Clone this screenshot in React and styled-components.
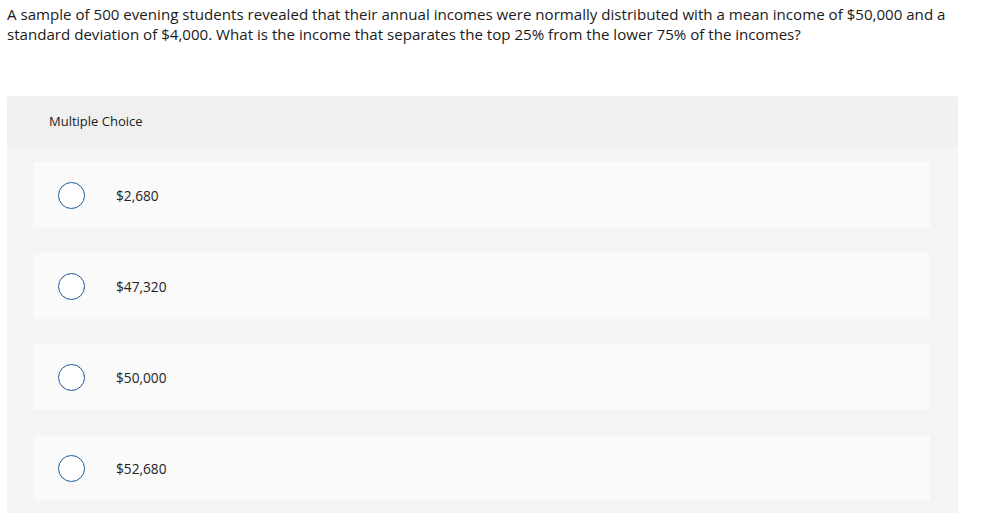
import React from "react";
import styled, { createGlobalStyle } from "styled-components";

const GlobalStyle = createGlobalStyle`
  body {
    margin: 0;
    background: #ffffff;
    font-family: "Open Sans", "Liberation Sans", sans-serif;
    color: #1f1f1f;
  }
`;

const Page = styled.div`
  padding: 4px 24px 0 7px;
`;

const Question = styled.p`
  margin: 0;
  font-size: 15.1px;
  line-height: 20px;
  color: #1a1a1a;
`;

const Panel = styled.section`
  margin-top: 52px;
  background: #f4f4f4;
  border-radius: 3px 3px 0 0;
  padding-bottom: 12px;
`;

const PanelHeader = styled.div`
  height: 50px;
  display: flex;
  align-items: center;
  padding-left: 42px;
  background: #f0f0f0;
  border-radius: 3px 3px 0 0;
  font-size: 13px;
  color: #222;
`;

const Options = styled.div`
  display: flex;
  flex-direction: column;
  gap: 25px;
  padding: 16px 28px 0 26px;
`;

const Option = styled.label`
  height: 66px;
  display: flex;
  align-items: center;
  background: #fafafa;
  border-radius: 3px;
  padding-left: 25px;
  cursor: pointer;
`;

const Radio = styled.span`
  width: 25px;
  height: 25px;
  border: 1.5px solid #1d5a94;
  border-radius: 50%;
  background: #fff;
  flex-shrink: 0;
`;

const OptionText = styled.span`
  margin-left: 31px;
  font-size: 13.7px;
  color: #222;
`;

const choices = ["$2,680", "$47,320", "$50,000", "$52,680"];

export default function App() {
  return (
    <>
      <GlobalStyle />
      <Page>
        <Question>
          A sample of 500 evening students revealed that their annual incomes
          were normally distributed with a mean income of $50,000 and a
          standard deviation of $4,000. What is the income that separates the
          top 25% from the lower 75% of the incomes?
        </Question>
        <Panel>
          <PanelHeader>Multiple Choice</PanelHeader>
          <Options>
            {choices.map((c) => (
              <Option key={c}>
                <Radio />
                <OptionText>{c}</OptionText>
              </Option>
            ))}
          </Options>
        </Panel>
      </Page>
    </>
  );
}
